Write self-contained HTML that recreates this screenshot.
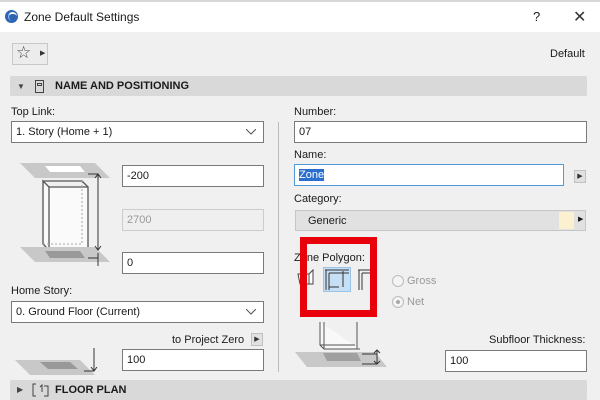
<!DOCTYPE html>
<html><head><style>
*{box-sizing:border-box;margin:0;padding:0}
body{width:600px;height:400px;overflow:hidden;background:#f0f0f0;font-family:"Liberation Sans",sans-serif;font-size:11px;color:#1a1a1a;position:relative}
.a{position:absolute}
.inp{position:absolute;background:#fff;border:1px solid #7a7a7a;height:22px;padding:4px 4px;font-size:11px;line-height:13px}
.lbl{position:absolute;font-size:11px}
.hdr{position:absolute;left:10px;width:577px;height:20px;background:#d9d9d9;border-radius:2px}
.hdr b{position:absolute;left:45px;top:4px;font-size:11px}
.chev{position:absolute;right:7px;top:7px}
.tb{position:absolute;width:12px;height:13px;background:#e1e1e1;border:1px solid #c0c0c0;font-size:7px;text-align:center;line-height:11px;color:#333}
</style></head><body>
<div class="a" style="left:0;top:0;width:600px;height:32px;background:#fff;border-top:2px solid #d8d8d8"></div>
<div class="a" style="left:5px;top:10px;width:13px;height:13px;border-radius:50%;background:#2d64b3"></div>
<div class="a" style="left:8px;top:12px;width:9px;height:9px;border-radius:50%;border-top:2px solid #fff;border-left:1px solid #9cc0ee"></div>
<div class="lbl" style="left:24px;top:10px;font-size:12px">Zone Default Settings</div>
<div class="lbl" style="left:533px;top:9px;font-size:13px">?</div>
<div class="lbl" style="left:573px;top:7px;font-size:16px;color:#333">✕</div>

<div class="a" style="left:12px;top:43px;width:36px;height:22px;border:1px solid #c8c8c8;background:#ececec"></div>
<div class="lbl" style="left:16px;top:43px;font-size:17px;color:#444">☆</div>
<div class="lbl" style="left:40px;top:49px;font-size:7px;color:#333">▶</div>
<div class="lbl" style="left:550px;top:48px">Default</div>

<div class="hdr" style="top:76px"><span class="a" style="left:7px;top:6px;font-size:8px;color:#444">▼</span>
<span class="a" style="left:25px;top:4px;width:9px;height:13px;border:1px solid #444"></span><span class="a" style="left:27px;top:7px;width:5px;height:3px;border:1px solid #444"></span>
<b>NAME AND POSITIONING</b></div>

<div class="lbl" style="left:11px;top:106px">Top Link:</div>
<div class="inp" style="left:11px;top:121px;width:253px">1. Story (Home + 1)<svg class="chev" width="10" height="6"><path d="M0,0 L5,5 L10,0" stroke="#555" fill="none"/></svg></div>

<svg class="a" style="left:0;top:150px" width="120" height="125">
<polygon points="20,13 95,13 110,28 35,28" fill="#c8c8c8"/><polygon points="45,16 80,16 85,22 50,22" fill="#fff"/>
<path d="M43,31 L49,37 L88,37 L88,100 L49,100 L43,94 Z" fill="#fafafa" stroke="#555" stroke-width="1.3"/>
<path d="M49,37 V100 M43,31 L82,31 L88,37" fill="none" stroke="#555" stroke-width="1.3"/>
<path d="M82,31 V94 H43" fill="none" stroke="#aaa" stroke-dasharray="2,2"/>
<polygon points="20,97 95,97 110,112 35,112" fill="#c8c8c8"/><polygon points="45,101 80,101 85,108 50,108" fill="#999"/>
<path d="M88,24 H98 M98,24 V100 M95,28 L98,24 L101,28 M95,96 L98,100 L101,96 M88,108 H98 M98,103 V116" stroke="#333" fill="none"/>
</svg>
<svg class="a" style="left:0;top:340px" width="120" height="35"><polygon points="15,20 80,20 95,35 30,35" fill="#c8c8c8"/><polygon points="40,22 70,22 78,29 48,29" fill="#999"/><path d="M94,8 V30 M91,27 L94,31 L97,27 M84,31 H94" stroke="#333" fill="none"/></svg>

<div class="inp" style="left:122px;top:165px;width:142px">-200</div>
<div class="inp" style="left:122px;top:209px;width:142px;background:#efefef;border-color:#ccc;color:#999">2700</div>
<div class="inp" style="left:122px;top:252px;width:142px">0</div>

<div class="lbl" style="left:11px;top:285px">Home Story:</div>
<div class="inp" style="left:11px;top:301px;width:253px">0. Ground Floor (Current)<svg class="chev" width="10" height="6"><path d="M0,0 L5,5 L10,0" stroke="#555" fill="none"/></svg></div>
<div class="lbl" style="left:172px;top:334px">to Project Zero</div>
<div class="tb" style="left:251px;top:333px">▶</div>
<div class="inp" style="left:122px;top:349px;width:142px">100</div>

<div class="a" style="left:278px;top:122px;width:1px;height:250px;background:#bbb"></div>

<div class="lbl" style="left:294px;top:106px">Number:</div>
<div class="inp" style="left:294px;top:121px;width:293px">07</div>
<div class="lbl" style="left:294px;top:149px">Name:</div>
<div class="inp" style="left:294px;top:164px;width:270px;border-color:#4f9ad8"><span style="background:#2a6fd0;color:#fff">Zone</span></div>
<div class="tb" style="left:574px;top:170px">▶</div>
<div class="lbl" style="left:294px;top:193px">Category:</div>
<div class="a" style="left:295px;top:210px;width:291px;height:21px;background:#e1e1e1;border:1px solid #c6c6c6;padding:4px 12px">Generic</div>
<div class="a" style="left:559px;top:212px;width:15px;height:17px;background:#fbf0cf"></div>
<div class="lbl" style="left:578px;top:215px;font-size:7px">▶</div>

<div class="lbl" style="left:294px;top:252px">Zone Polygon:</div>
<div class="a" style="left:323px;top:267px;width:28px;height:25px;background:#c6dff5;border:1px solid #9ac3e8"></div>
<svg class="a" style="left:295px;top:266px" width="90" height="28">
<path d="M3,8 H14 L18,4 V18 H5 Z M14,8 V18" stroke="#444" fill="#fff"/>
<path d="M30,4 H54 M31,4 V24 M34,7 H54 M34,7 V24 M34,21 H44 M48,5 V21" stroke="#333" fill="none"/>
<path d="M63,4 H80 M64,4 V24 M67,7 H80 M67,7 V24" stroke="#333" fill="none"/>
</svg>
<div class="a" style="left:300px;top:237px;width:77px;height:80px;border:7px solid #e8000b"></div>

<div class="a" style="left:392px;top:275px;width:12px;height:12px;border-radius:50%;border:1px solid #bbb;background:#f4f4f4"></div>
<div class="lbl" style="left:407px;top:275px;color:#999">Gross</div>
<div class="a" style="left:392px;top:296px;width:12px;height:12px;border-radius:50%;border:1px solid #bbb;background:#f4f4f4"></div>
<div class="a" style="left:396px;top:300px;width:4px;height:4px;border-radius:50%;background:#aaa"></div>
<div class="lbl" style="left:407px;top:296px;color:#999">Net</div>

<svg class="a" style="left:295px;top:320px" width="110" height="50">
<path d="M25,2 V25 L29,29 H65 M29,2 V29 M62,2 V29 M25,25 H60" stroke="#555" fill="#f8f8f8"/>
<polygon points="0,32 80,32 92,47 12,47" fill="#c8c8c8"/><polygon points="28,33 62,33 66,41 32,41" fill="#a0a0a0"/>
<path d="M67,34 H82 M82,30 V44 M79,33 L82,30 L85,33 M79,41 L82,44 L85,41 M67,44 H82" stroke="#333" fill="none"/></svg>
<div class="lbl" style="left:489px;top:334px">Subfloor Thickness:</div>
<div class="inp" style="left:445px;top:350px;width:142px">100</div>

<div class="hdr" style="top:380px"><span class="a" style="left:7px;top:5px;font-size:8px;color:#444">▶</span>
<svg class="a" style="left:22px;top:3px" width="18" height="14"><path d="M4,1 H1 V13 H4 M8,4 L10,2 V9 M12,3 H16 V13 H12" stroke="#444" fill="none"/></svg>
<b>FLOOR PLAN</b></div>
</body></html>
